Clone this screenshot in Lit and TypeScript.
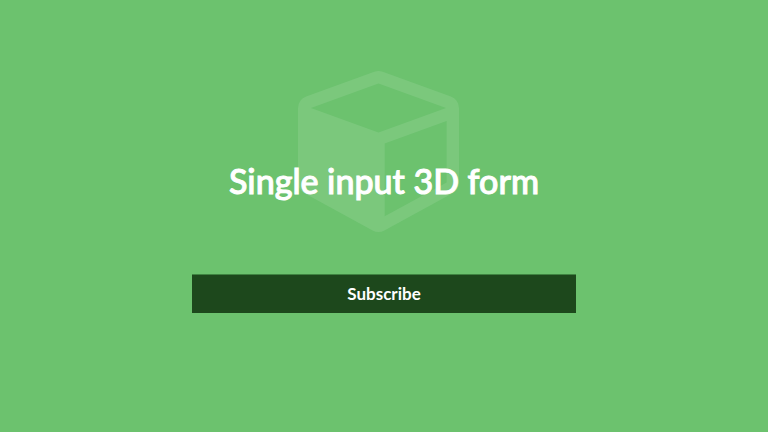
import { LitElement, html, css } from "lit";
import { customElement } from "lit/decorators.js";

@customElement("app-root")
export class AppRoot extends LitElement {
  static styles = css`
    :host {
      display: block;
      min-height: 100vh;
      background: #6cc26e;
      color: #fff;
      font-family: Lato, "Noto Sans", sans-serif;
    }
    .page {
      display: flex;
      flex-direction: column;
      align-items: center;
      padding-top: 71px;
    }
    .hero {
      display: grid;
      place-items: center;
      width: 100%;
    }
    .cube,
    .title {
      grid-area: 1 / 1;
    }
    .cube {
      width: 161px;
      height: 161px;
      margin-right: 12px;
      fill: rgba(255, 255, 255, 0.1);
    }
    .title {
      margin: 58px 0 0;
      font-size: 34px;
      line-height: 40px;
      font-weight: 500;
      white-space: nowrap;
      -webkit-text-stroke: 1px #fff;
      stroke-linejoin: round;
    }
    .form {
      width: 50%;
      margin-top: 42px;
    }
    .subscribe {
      display: block;
      box-sizing: border-box;
      width: 100%;
      height: 39px;
      padding: 0;
      border: 0;
      border-top: 1px solid #3f8441;
      background: #1d481c;
      color: #fff;
      font-family: inherit;
      font-size: 17px;
      font-weight: 700;
      line-height: 38px;
      cursor: pointer;
    }
  `;

  render() {
    return html`
      <main class="page">
        <header class="hero">
          <svg class="cube" viewBox="0 128 1664 1664" aria-hidden="true">
            <path
              d="M896 1629l640-349v-636l-640 233v752zm-64-865l698-254-698-254-698 254zm832-252v768q0 35-18 65t-49 47l-704 384q-28 16-61 16t-61-16l-704-384q-31-17-49-47t-18-65v-768q0-40 23-73t61-47l704-256q22-8 44-8t44 8l704 256q38 14 61 47t23 73z"
            />
          </svg>
          <h1 class="title">Single input 3D form</h1>
        </header>
        <form class="form" @submit=${(e: Event) => e.preventDefault()}>
          <button class="subscribe" type="submit">Subscribe</button>
        </form>
      </main>
    `;
  }
}
